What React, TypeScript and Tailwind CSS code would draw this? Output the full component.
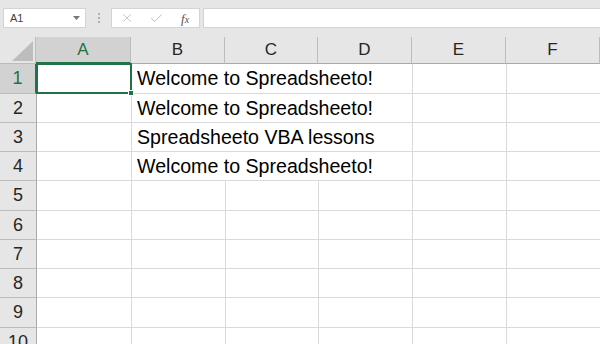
import { X, Check } from "lucide-react";

const cols = ["A", "B", "C", "D", "E", "F"];
const colWidths = ["w-[95px]", "w-[94px]", "w-[93px]", "w-[94px]", "w-[94px]", "w-[94px]"];
const rowHeights = ["h-[30px]", "h-[29px]", "h-[29px]", "h-[29px]", "h-[30px]", "h-[29px]", "h-[29px]", "h-[29px]", "h-[30px]", "h-[29px]"];

const texts: Record<number, string> = {
	1: "Welcome to Spreadsheeto!",
	2: "Welcome to Spreadsheeto!",
	3: "Spreadsheeto VBA lessons",
	4: "Welcome to Spreadsheeto!",
};

const font = "font-['Liberation_Sans',Arial,sans-serif]";

function Toolbar() {
	return (
		<div className="h-[37px] bg-[#e6e6e6] flex items-start pt-[8px] pl-[3px] shrink-0">
			<div className="w-[83px] h-[20px] bg-white border border-[#d4d4d4] flex items-center justify-between pl-[6px] pr-[5px]">
				<span className={`${font} text-[11px] text-[#444]`}>A1</span>
				<svg width="7" height="4" viewBox="0 0 7 4">
					<path d="M0 0h7L3.5 4z" fill="#777" />
				</svg>
			</div>
			<div className="w-[25px] h-[20px] flex flex-col items-center justify-center gap-[2px]">
				<span className="w-[2px] h-[2px] bg-[#b0b0b0]" />
				<span className="w-[2px] h-[2px] bg-[#b0b0b0]" />
				<span className="w-[2px] h-[2px] bg-[#b0b0b0]" />
			</div>
			<div className="w-[89px] h-[20px] bg-white border border-[#d4d4d4] flex items-center pl-[8px]">
				<X size={14} strokeWidth={1.3} className="text-[#b8b8b8]" />
				<Check size={15} strokeWidth={1.5} className="text-[#b8b8b8] ml-[15px]" />
				<span className="ml-[17px] font-['Liberation_Serif',serif] italic text-[13px] text-[#555] leading-none">
					f<span className="text-[10px]">x</span>
				</span>
			</div>
			<div className="ml-[3px] flex-1 h-[20px] bg-white border border-[#d4d4d4] border-r-0" />
		</div>
	);
}

function HeaderRow() {
	return (
		<div className="flex h-[27px] shrink-0">
			<div className="w-[37px] h-full bg-[#e6e6e6] border-r border-b border-[#bcbcbc] flex items-end justify-end pr-[2px] pb-[2px]">
				<svg width="21" height="20" viewBox="0 0 21 20">
					<path d="M21 0V20H0z" fill="#bdbdbd" />
				</svg>
			</div>
			{cols.map((c, i) => (
				<div
					key={c}
					className={`${colWidths[i]} shrink-0 h-full flex items-center justify-center ${font} text-[17px] ${
						i === 0
							? "bg-[#d2d2d2] text-[#217346] border-b-2 border-b-[#217346] border-r border-r-[#bcbcbc]"
							: "bg-[#e6e6e6] text-[#262626] border-b border-b-[#a9a9a9] border-r border-r-[#bcbcbc]"
					}`}
				>
					{c}
				</div>
			))}
		</div>
	);
}

function Row({ n }: { n: number }) {
	const text = texts[n];
	return (
		<div className={`flex ${rowHeights[n - 1]} shrink-0`}>
			<div
				className={`w-[37px] shrink-0 h-full flex items-center justify-center ${font} text-[18px] ${
					n === 1
						? "bg-[#d2d2d2] text-[#217346] border-r-2 border-r-[#217346] border-b border-b-[#bcbcbc]"
						: "bg-[#e6e6e6] text-[#262626] border-r border-r-[#a9a9a9] border-b border-b-[#bcbcbc]"
				}`}
			>
				{n}
			</div>
			<div className={`${colWidths[0]} shrink-0 h-full border-r border-b border-[#dadada] relative`}>
				{n === 1 && (
					<div className="absolute -left-[1px] -top-[1px] w-[96px] h-[31px] border-2 border-[#217346] z-10">
						<div className="absolute -right-[4px] -bottom-[4px] w-[6px] h-[6px] bg-[#217346] border border-white" />
					</div>
				)}
			</div>
			{text ? (
				<div className="w-[281px] shrink-0 h-full border-r border-b border-[#dadada] flex items-center pl-[5px] pt-[1px]">
					<span className={`${font} text-[19.6px] text-black whitespace-nowrap`}>{text}</span>
				</div>
			) : (
				[1, 2, 3].map((i) => (
					<div key={i} className={`${colWidths[i]} shrink-0 h-full border-r border-b border-[#dadada]`} />
				))
			)}
			{[4, 5].map((i) => (
				<div key={i} className={`${colWidths[i]} shrink-0 h-full border-r border-b border-[#dadada]`} />
			))}
		</div>
	);
}

export default function App() {
	return (
		<div className="w-[600px] h-[344px] overflow-hidden bg-white flex flex-col">
			<Toolbar />
			<HeaderRow />
			{[1, 2, 3, 4, 5, 6, 7, 8, 9, 10].map((n) => (
				<Row key={n} n={n} />
			))}
		</div>
	);
}
